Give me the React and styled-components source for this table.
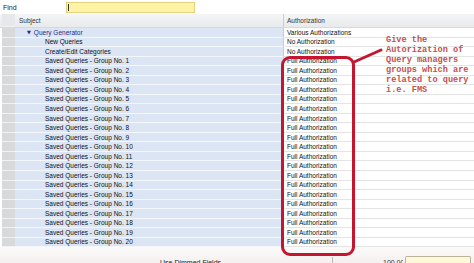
import React from "react";
import styled, { createGlobalStyle } from "styled-components";

const GlobalStyle = createGlobalStyle`
  html, body {
    margin: 0;
    padding: 0;
    background: #ffffff;
  }
  body {
    font-family: "Liberation Sans", Arial, sans-serif;
  }
`;

const rows = [
  { subject: "Query Generator", auth: "Various Authorizations", level: 0 },
  { subject: "New Queries", auth: "No Authorization", level: 1 },
  { subject: "Create/Edit Categories", auth: "No Authorization", level: 1 },
  ...Array.from({ length: 20 }, (_, i) => ({
    subject: `Saved Queries - Group No. ${i + 1}`,
    auth: "Full Authorization",
    level: 1,
  })),
];

export default function App() {
  return (
    <Page>
      <GlobalStyle />
      <FindBar>
        <FindLabel>Find</FindLabel>
        <FindInput>
          <Caret />
        </FindInput>
      </FindBar>
      <Table>
        <HeaderRow>
          <Gutter $header />
          <HeadCell>Subject</HeadCell>
          <HeadCell $right>Authorization</HeadCell>
        </HeaderRow>
        {rows.map((row) => (
          <Row key={row.subject}>
            <Gutter />
            <SubjectCell $level={row.level}>
              {row.level === 0 && <Arrow>▼</Arrow>}
              <SubjectText $group={row.level === 0}>{row.subject}</SubjectText>
            </SubjectCell>
            <AuthCell>{row.auth}</AuthCell>
          </Row>
        ))}
      </Table>
      <Footer>
        <FooterText>Use Dimmed Fields</FooterText>
        <FooterDivider />
        <FooterValue>100.00</FooterValue>
        <FooterButton />
      </Footer>

      <Highlight />
      <Pointer width="474" height="263">
        <line
          x1="354"
          y1="62"
          x2="381"
          y2="50"
          stroke="#c4162e"
          strokeWidth="3"
          strokeLinecap="round"
        />
      </Pointer>
      <Note>
        Give the
        <br />
        Autorization of
        <br />
        Query managers
        <br />
        groups which are
        <br />
        related to query
        <br />
        i.e. FMS
      </Note>
    </Page>
  );
}

const Page = styled.div`
  position: relative;
  width: 474px;
  height: 263px;
  overflow: hidden;
  background: #f7f5f5;
`;

const FindBar = styled.div`
  display: flex;
  align-items: center;
  height: 14px;
  background: #ffffff;
`;

const FindLabel = styled.span`
  width: 63px;
  padding-left: 3px;
  font-size: 7px;
  color: #1a1a1a;
`;

const FindInput = styled.div`
  position: relative;
  width: 127px;
  height: 9px;
  background: #fff4a6;
  border: 1px solid #e3d27a;
`;

const Caret = styled.span`
  position: absolute;
  left: 1px;
  top: 1px;
  width: 1px;
  height: 7px;
  background: #333;
`;

const Table = styled.div`
  display: flex;
  flex-direction: column;
  background: #ffffff;
`;

const HeaderRow = styled.div`
  display: grid;
  grid-template-columns: 15px 268px 1fr;
  height: 14px;
  background: linear-gradient(#f4f5f6, #e8eaec);
  border-bottom: 1px solid #d6d9dd;
  box-sizing: border-box;
`;

const HeadCell = styled.div`
  display: flex;
  align-items: center;
  padding-left: 3px;
  font-size: 6.5px;
  color: #333;
  border-left: 1px solid ${(p) => (p.$right ? "#c9ccd1" : "transparent")};
`;

const Row = styled.div`
  display: grid;
  grid-template-columns: 15px 268px 1fr;
  height: 9.545px;
`;

const Gutter = styled.div`
  margin-left: 2px;
  background: ${(p) => (p.$header ? "#e6e8ea" : "#d8d9db")};
  border-bottom: 1px solid #f1f2f3;
  box-sizing: border-box;
`;

const SubjectCell = styled.div`
  display: flex;
  align-items: center;
  padding-left: ${(p) => (p.$level === 0 ? "12px" : "30px")};
  background: #dbe5f3;
  border-bottom: 1px solid #f3f6fb;
  box-sizing: border-box;
  font-size: 6.5px;
  white-space: nowrap;
`;

const Arrow = styled.span`
  font-size: 5px;
  color: #1c2a7a;
  margin-right: 3px;
  font-family: "DejaVu Sans", sans-serif;
`;

const SubjectText = styled.span`
  color: ${(p) => (p.$group ? "#1e2d8a" : "#111")};
`;

const AuthCell = styled.div`
  display: flex;
  align-items: center;
  padding-left: 3px;
  font-size: 6.5px;
  color: #111;
  background: #ffffff;
  border-left: 1px solid #c9ccd1;
  border-bottom: 1px solid #e4e4e4;
  box-sizing: border-box;
  white-space: nowrap;
`;

const Footer = styled.div`
  display: flex;
  align-items: flex-end;
  height: 16px;
  background: linear-gradient(#fbfafa, #f6f0f0);
`;

const FooterText = styled.span`
  margin-left: 160px;
  width: 172px;
  font-size: 7px;
  line-height: 8px;
  height: 4px;
  overflow: hidden;
  color: #222;
`;

const FooterDivider = styled.span`
  width: 1px;
  height: 6px;
  background: #b8b8b8;
`;

const FooterValue = styled.span`
  margin-left: 50px;
  width: 20px;
  font-size: 7px;
  line-height: 8px;
  height: 4px;
  overflow: hidden;
  color: #333;
`;

const FooterButton = styled.span`
  margin-left: 2px;
  width: 64px;
  height: 6px;
  background: #fdf8d8;
  border: 1px solid #b9b49a;
  border-bottom: none;
  border-radius: 2px 2px 0 0;
`;

const Highlight = styled.div`
  position: absolute;
  left: 281px;
  top: 56px;
  width: 74px;
  height: 200px;
  box-sizing: border-box;
  border: 3px solid #c4162e;
  border-radius: 9px;
`;

const Pointer = styled.svg`
  position: absolute;
  left: 0;
  top: 0;
  pointer-events: none;
`;

const Note = styled.div`
  position: absolute;
  left: 386px;
  top: 35px;
  font-family: "Liberation Mono", "Courier New", monospace;
  font-weight: bold;
  font-size: 8.6px;
  line-height: 10px;
  color: #c4504f;
  white-space: nowrap;
`;
